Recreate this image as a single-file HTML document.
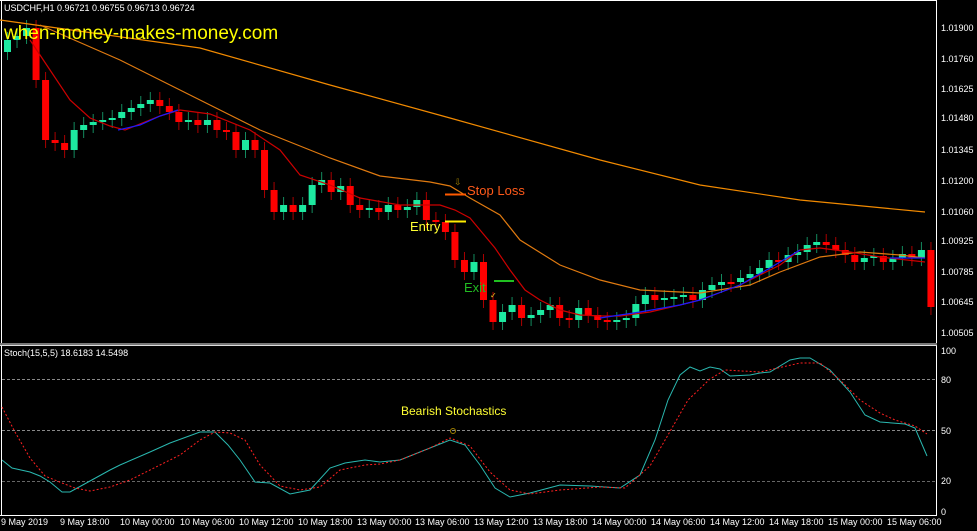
<!DOCTYPE html><html><head><style>
body{margin:0;background:#000;width:977px;height:531px;overflow:hidden;font-family:"Liberation Sans",sans-serif}
svg text{font-family:"Liberation Sans",sans-serif}
</style></head><body>
<svg id="s" width="977" height="531" xmlns="http://www.w3.org/2000/svg" style="position:absolute;left:0;top:0">
<rect width="977" height="531" fill="#000"/>
<g stroke="#fff" fill="none" stroke-width="1">
<line x1="1.5" y1="0" x2="1.5" y2="515"/>
<line x1="936.5" y1="0" x2="936.5" y2="515"/>
<line x1="0" y1="515.5" x2="937" y2="515.5"/>
<line x1="0" y1="0.5" x2="937" y2="0.5"/>
</g>
<rect x="0" y="343" width="937" height="3" fill="#777"/>
<line x1="0" y1="345.5" x2="937" y2="345.5" stroke="#ddd"/>
<g stroke="#888" stroke-dasharray="3,2">
<line x1="2" y1="379.5" x2="936" y2="379.5"/>
<line x1="2" y1="430.5" x2="936" y2="430.5"/>
<line x1="2" y1="481.5" x2="936" y2="481.5" stroke="#666"/>
</g>
<g id="cd"></g>
<polyline fill="none" stroke="#f28a00" stroke-width="1.2" points="0,20 100,34 200,48 330,85 450,118 600,160 700,185 800,200 925,212"/>
<polyline fill="none" stroke="#e07a10" stroke-width="1.2" points="40,25 120,60 200,100 260,130 330,158 380,176 430,182 450,186 470,198 500,215 520,240 560,265 600,280 640,290 700,293 750,285 780,272 820,257 860,252 900,255 925,258"/>
<polyline fill="none" stroke="#cc0000" stroke-width="1.2" points="30,40 50,70 70,100 90,118 110,126 125,130 160,116 180,110 210,114 250,130 280,150 300,175 330,185 360,198 400,205 440,205 455,210 470,218 480,230 495,248 510,270 525,290 540,300 560,310 580,315 600,316 620,316 650,312 680,305 700,300 740,285 780,265 800,250 820,248 850,252 880,257 925,262"/>
<polyline fill="none" stroke="#1a1aff" stroke-width="1.2" points="118,130 140,125 160,116 178,110"/>
<polyline fill="none" stroke="#1a1aff" stroke-width="1.2" points="600,318 640,312 680,305 700,300 740,285 770,268 800,250"/>
<polyline fill="none" stroke="#1a1aff" stroke-width="1.2" points="890,258 925,258"/>
<line x1="445" y1="194.5" x2="466" y2="194.5" stroke="#ff5a00" stroke-width="2"/>
<line x1="445" y1="221.5" x2="466" y2="221.5" stroke="#ffee00" stroke-width="2"/>
<line x1="494" y1="281" x2="514" y2="281" stroke="#20c020" stroke-width="2"/>
<text x="454" y="185" fill="#a08000" font-size="9">⇩</text>
<text x="467" y="195" fill="#ff5a1a" font-size="13">Stop Loss</text>
<text x="410" y="231" fill="#ffff33" font-size="13">Entry</text>
<text x="464" y="292" fill="#22bb22" font-size="13">Exit</text>
<text x="490" y="298" fill="#e8c020" font-size="8">✓</text>
<text x="401" y="415" fill="#ffff33" font-size="12">Bearish Stochastics</text>
<circle cx="453" cy="431" r="2.5" fill="none" stroke="#a08000"/>
<polyline fill="none" stroke="#2ab8b0" stroke-width="1" points="2,460 12,468 30,472 40,476 50,482 62,492 70,492 90,481 110,470 120,465 150,452 170,443 200,432 215,432 228,445 240,460 255,482 270,483 290,494 310,490 330,468 345,463 365,460 380,462 400,460 420,452 450,440 465,445 480,465 495,488 510,497 530,493 560,485 590,486 620,488 640,475 655,440 668,400 680,375 690,367 700,371 710,367 720,369 730,376 750,375 760,373 770,372 790,360 800,358 810,358 830,370 850,392 865,415 880,422 905,424 915,428 927,456"/>
<polyline fill="none" stroke="#ff2020" stroke-width="1" stroke-dasharray="2,2" points="2,407 15,432 30,458 45,476 62,483 75,488 90,491 110,487 130,480 160,465 180,455 200,440 215,432 230,433 245,440 260,465 280,486 300,490 320,487 340,470 365,465 380,464 400,460 430,448 450,438 470,446 490,472 510,490 530,494 560,490 600,487 625,488 650,466 668,435 688,400 710,379 725,370 760,372 800,363 820,363 840,380 860,400 880,413 895,420 915,426 927,434"/>
<g fill="#fff" font-size="9">
<text x="4" y="11">USDCHF,H1  0.96721 0.96755 0.96713 0.96724</text>
<text x="4" y="356">Stoch(15,5,5) 18.6183 14.5498</text>
</g>
<text x="4" y="39" fill="#ffff00" font-size="19">when-money-makes-money.com</text>
<g fill="#fff" font-size="9">
<text x="941" y="31">1.01900</text><text x="941" y="62">1.01760</text><text x="941" y="92">1.01625</text><text x="941" y="121">1.01480</text><text x="941" y="153">1.01345</text><text x="941" y="184">1.01200</text><text x="941" y="215">1.01060</text><text x="941" y="244">1.00925</text><text x="941" y="275">1.00785</text><text x="941" y="305">1.00645</text><text x="941" y="336">1.00505</text>
<text x="941" y="354">100</text><text x="941" y="383">80</text><text x="941" y="434">50</text><text x="941" y="484">20</text><text x="941" y="515">0</text>
<text x="1" y="525">9 May 2019</text><text x="60" y="525">9 May 18:00</text><text x="120" y="525">10 May 00:00</text><text x="180" y="525">10 May 06:00</text><text x="239" y="525">10 May 12:00</text><text x="298" y="525">10 May 18:00</text><text x="357" y="525">13 May 00:00</text><text x="415" y="525">13 May 06:00</text><text x="474" y="525">13 May 12:00</text><text x="533" y="525">13 May 18:00</text><text x="592" y="525">14 May 00:00</text><text x="651" y="525">14 May 06:00</text><text x="710" y="525">14 May 12:00</text><text x="769" y="525">14 May 18:00</text><text x="828" y="525">15 May 00:00</text><text x="887" y="525">15 May 06:00</text>
</g>
</svg>
<script>
var p=[52,40,36,28,80,140,143,150,130,125,122,120,118,112,108,104,100,106,112,122,120,125,120,130,132,150,140,150,190,212,205,212,205,185,180,192,186,205,210,208,212,205,210,207,200,220,222,232,260,272,262,300,322,312,305,318,315,310,305,318,320,308,315,320,322,320,318,304,295,300,298,297,295,300,290,285,282,282,278,274,268,260,262,255,252,245,242,245,250,255,262,258,256,262,258,254,258,250,307];
var g=document.getElementById('cd'),h='';
for(var i=1;i<p.length;i++){var x=4+(i-1)*9.52,o=p[i-1],c=p[i],up=c<o,col=up?'#1de9a0':'#ff0000';
var t=Math.min(o,c),b=Math.max(o,c);if(b-t<2)b=t+2;
h+='<line x1="'+(x+3.5)+'" x2="'+(x+3.5)+'" y1="'+(t-8)+'" y2="'+(b+8)+'" stroke="'+(up?'#138a5e':'#aa0000')+'"/>';
h+='<rect x="'+x+'" y="'+t+'" width="7" height="'+(b-t)+'" fill="'+col+'"/>';}
g.innerHTML=h;
</script>
</body></html>
